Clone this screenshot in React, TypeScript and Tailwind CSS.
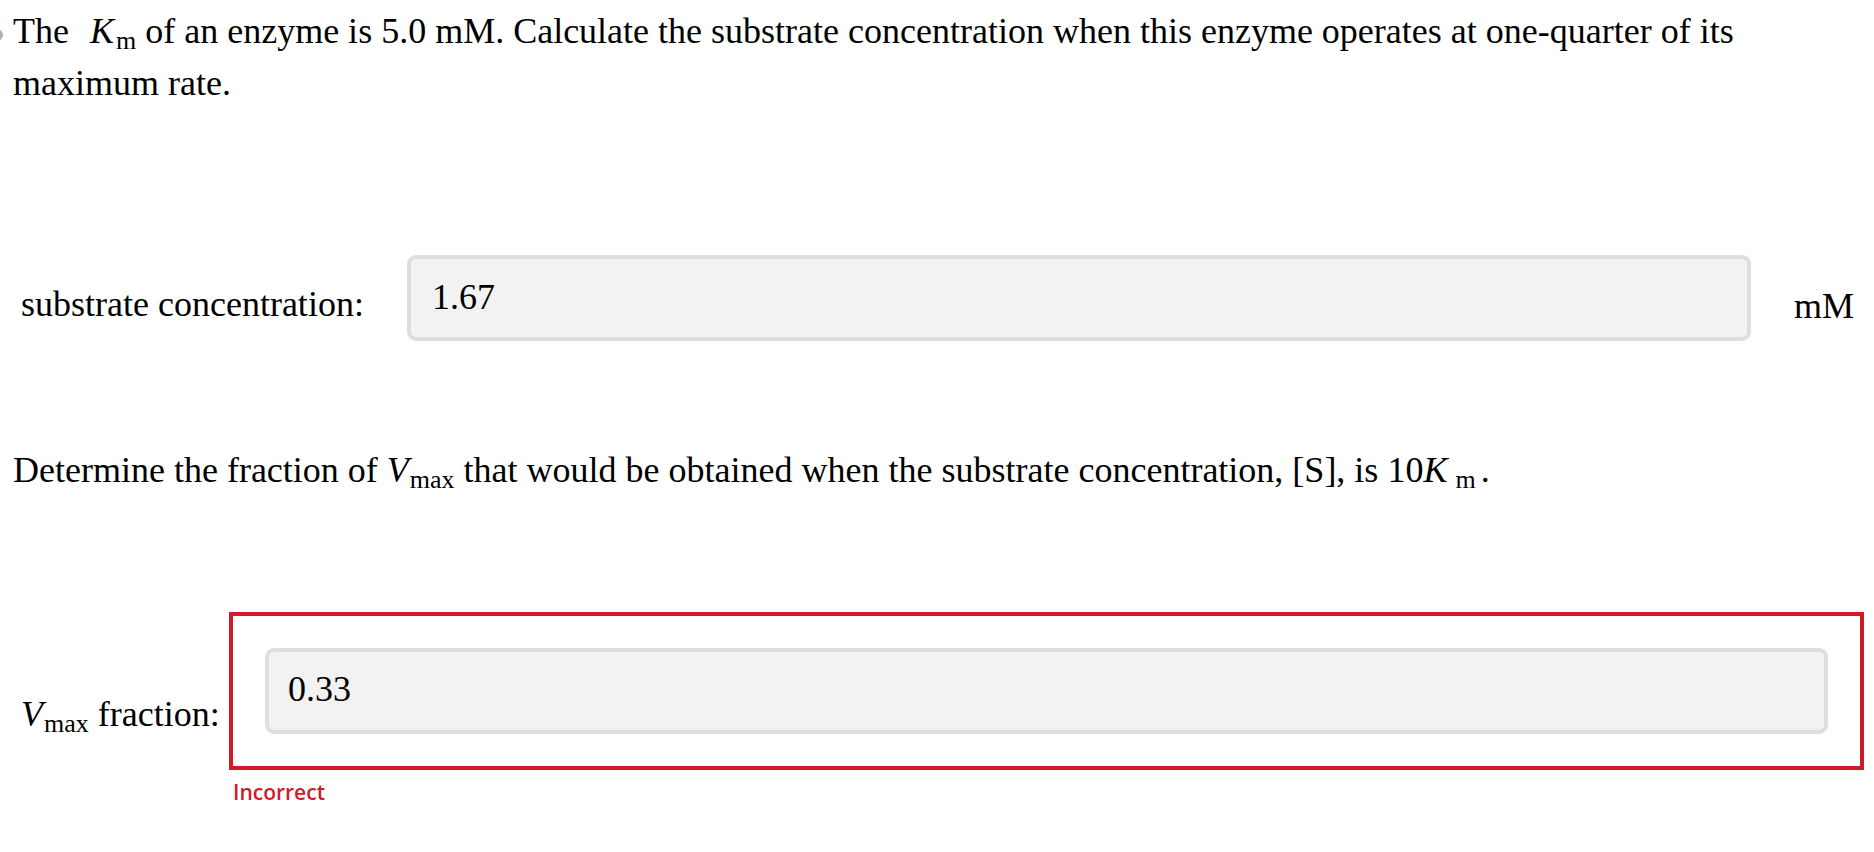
import React from "react";

function Sub({ children }: { children: React.ReactNode }) {
  return <span className="text-[26px] leading-none align-[-6px]">{children}</span>;
}

export default function App() {
  return (
    <div className="relative w-[1874px] h-[852px] overflow-hidden bg-white text-black font-['Liberation_Serif',serif] text-[36px]">
      <span className="absolute left-[-9px] top-[29px] w-[12px] h-[12px] rounded-full bg-[#b0b0b0]" />

      <p className="pl-[13px] pt-[5px] leading-[52px] w-[1800px]">
        The <i className="ml-[12px]">K</i>
        <span className="ml-[2px]">
          <Sub>m</Sub>
        </span>{" "}
        of an enzyme is 5.0 mM. Calculate the substrate concentration when this enzyme operates at
        one-quarter of its maximum rate.
      </p>

      <div className="mt-[146px] flex items-start h-[86px]">
        <span className="shrink-0 w-[407px] pl-[21px] pt-[29px] leading-[41px]">
          substrate concentration:
        </span>
        <div className="flex-1 h-[86px] border-4 border-[#dedede] rounded-[9px] bg-[#f2f2f2] pt-[18px] pl-[21px] leading-[41px]">
          1.67
        </div>
        <span className="shrink-0 ml-[43px] mr-[20px] pt-[31px] leading-[41px]">mM</span>
      </div>

      <p className="mt-[109px] pl-[13px] leading-[41px]">
        Determine the fraction of <i>V</i>
        <span className="ml-[1px]">
          <Sub>max</Sub>
        </span>
        <span> that would be obtained when the substrate concentration, [S], is 10</span>
        <i>K</i>
        <span className="ml-[8px]">
          <Sub>m</Sub>
        </span>
        <span className="ml-[5px]">.</span>
      </p>

      <div className="mt-[119px] flex items-start">
        <span className="shrink-0 w-[229px] pl-[21px] pt-[82px] leading-[41px] whitespace-nowrap">
          <i>V</i>
          <span className="ml-[1px]">
            <Sub>max</Sub>
          </span>
          <span> fraction:</span>
        </span>
        <div className="flex flex-col">
          <div className="w-[1635px] border-4 border-[#d1192a] pt-[32px] pb-[32px] px-[32px]">
            <div className="h-[86px] border-4 border-[#dedede] rounded-[9px] bg-[#f2f2f2] pt-[17px] pl-[19px] leading-[41px]">
              0.33
            </div>
          </div>
          <span className="mt-[7px] pl-[4px] font-['Open_Sans',sans-serif] font-semibold text-[21px] text-[#d1192a]">
            Incorrect
          </span>
        </div>
      </div>
    </div>
  );
}
